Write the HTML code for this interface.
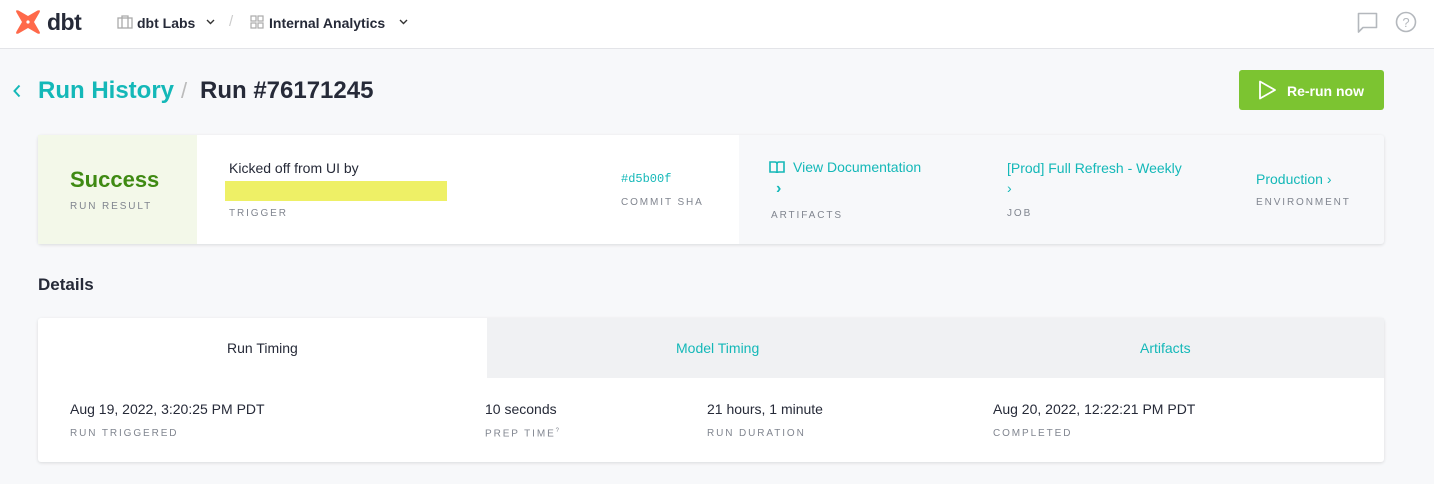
<!DOCTYPE html>
<html><head><style>
*{margin:0;padding:0;box-sizing:border-box}
body{width:1434px;height:484px;background:#f7f8fa;font-family:"Liberation Sans",sans-serif;position:relative;overflow:hidden;color:#262a38}
.a{position:absolute;white-space:nowrap}
.lbl{font-size:10px;letter-spacing:1.9px;color:#80858f}
.teal{color:#14b8b8}
</style></head><body>
<div class="a" style="left:0;top:0;width:1434px;height:49px;background:#fff;border-bottom:1px solid #e3e4e8"></div>
<svg class="a" style="left:14px;top:9px" width="28" height="26" viewBox="0 0 28 26"><path d="M2.5 3.5 Q1 0.5 4.5 1.5 L14 7 L23.5 1.5 Q27 0.5 25.5 3.5 L20 13 L25.5 22.5 Q27 25.5 23.5 24.5 L14 19 L4.5 24.5 Q1 25.5 2.5 22.5 L8 13 Z" fill="#ff694a"/><circle cx="14" cy="13" r="1.6" fill="#fff"/></svg>
<div class="a" style="left:47px;top:9px;font-size:23px;font-weight:bold;color:#262a38;letter-spacing:-0.5px">dbt</div>
<svg class="a" style="left:117px;top:15px" width="16" height="14"><rect x="1" y="3" width="14" height="10" fill="none" stroke="#aaa" stroke-width="1.3"/><path d="M5 3V1h6v2M5 3v10M11 3v10" stroke="#aaa" fill="none" stroke-width="1.3"/></svg>
<div class="a" style="left:137px;top:15px;font-size:14px;font-weight:bold">dbt Labs</div>
<svg class="a" style="left:206px;top:19px" width="9" height="6"><path d="M1 1l3.5 3.5L8 1" fill="none" stroke="#333" stroke-width="1.4"/></svg>
<div class="a" style="left:229px;top:13px;font-size:15px;color:#ccc">/</div>
<svg class="a" style="left:250px;top:15px" width="14" height="14"><g fill="none" stroke="#aaa" stroke-width="1.2"><rect x="1" y="1" width="5" height="5"/><rect x="8" y="1" width="5" height="5"/><rect x="1" y="8" width="5" height="5"/><rect x="8" y="8" width="5" height="5"/></g></svg>
<div class="a" style="left:269px;top:15px;font-size:14px;font-weight:bold">Internal Analytics</div>
<svg class="a" style="left:399px;top:19px" width="9" height="6"><path d="M1 1l3.5 3.5L8 1" fill="none" stroke="#333" stroke-width="1.4"/></svg>
<svg class="a" style="left:1357px;top:12px" width="22" height="22"><path d="M1.5 1.5h18v14H6l-4.5 4.5z" fill="none" stroke="#b4b8bd" stroke-width="1.6" stroke-linejoin="round"/></svg>
<svg class="a" style="left:1395px;top:11px" width="22" height="22"><circle cx="11" cy="11" r="9.5" fill="none" stroke="#b4b8bd" stroke-width="1.6"/><text x="11" y="16" text-anchor="middle" font-size="13" fill="#b4b8bd" font-family="Liberation Sans">?</text></svg>

<svg class="a" style="left:12px;top:84px" width="10" height="14"><path d="M7.5 1.5L2.5 7l5 5.5" fill="none" stroke="#14b8b8" stroke-width="2"/></svg>
<div class="a teal" style="left:38px;top:77px;font-size:24px;font-weight:bold">Run History</div>
<div class="a" style="left:181px;top:78px;font-size:22px;color:#bbb">/</div>
<div class="a" style="left:200px;top:77px;font-size:24px;font-weight:bold;color:#262a38">Run #76171245</div>
<div class="a" style="left:1239px;top:70px;width:145px;height:40px;background:#7cc431;border-radius:3px"></div>
<svg class="a" style="left:1258px;top:80px" width="20" height="20"><path d="M2 1.5L17 10 2 18.5z" fill="none" stroke="#fff" stroke-width="1.8" stroke-linejoin="round"/></svg>
<div class="a" style="left:1287px;top:83px;font-size:14px;font-weight:bold;color:#fff">Re-run now</div>

<div class="a" style="left:38px;top:135px;width:1346px;height:109px;background:#f7f8fa;border-radius:3px;box-shadow:0 1px 3px rgba(0,0,0,.12)"></div>
<div class="a" style="left:38px;top:135px;width:159px;height:109px;background:#f3f8e9"></div>
<div class="a" style="left:197px;top:135px;width:542px;height:109px;background:#fff"></div>
<div class="a" style="left:70px;top:167px;font-size:22px;font-weight:bold;color:#3f8a13">Success</div>
<div class="a lbl" style="left:70px;top:201px">RUN RESULT</div>
<div class="a" style="left:229px;top:160px;font-size:14px">Kicked off from UI by</div>
<div class="a" style="left:225px;top:181px;width:222px;height:20px;background:#eef066"></div>
<div class="a lbl" style="left:229px;top:208px">TRIGGER</div>
<div class="a teal" style="left:621px;top:172px;font-size:12px;font-family:'Liberation Mono',monospace">#d5b00f</div>
<div class="a lbl" style="left:621px;top:197px">COMMIT SHA</div>
<svg class="a" style="left:769px;top:160px" width="16" height="14"><path d="M1 2h5q2 0 2 2v9q0-1-2-1H1zM15 2h-5q-2 0-2 2v9q0-1 2-1h5z" fill="none" stroke="#14b8b8" stroke-width="1.6"/></svg>
<div class="a teal" style="left:793px;top:159px;font-size:14px">View Documentation</div>
<div class="a teal" style="left:776px;top:180px;font-size:16px;font-weight:bold">&#8250;</div>
<div class="a lbl" style="left:771px;top:210px">ARTIFACTS</div>
<div class="a teal" style="left:1007px;top:160px;font-size:14px">[Prod] Full Refresh - Weekly</div>
<div class="a teal" style="left:1007px;top:180px;font-size:14px">&#8250;</div>
<div class="a lbl" style="left:1007px;top:208px">JOB</div>
<div class="a teal" style="left:1256px;top:171px;font-size:14px">Production &#8250;</div>
<div class="a lbl" style="left:1256px;top:197px">ENVIRONMENT</div>

<div class="a" style="left:38px;top:275px;font-size:17px;font-weight:bold">Details</div>
<div class="a" style="left:38px;top:318px;width:1346px;height:144px;background:#fff;border-radius:3px;box-shadow:0 1px 3px rgba(0,0,0,.12)"></div>
<div class="a" style="left:487px;top:318px;width:897px;height:60px;background:#f0f1f3"></div>
<div class="a" style="left:227px;top:340px;font-size:14px">Run Timing</div>
<div class="a teal" style="left:676px;top:340px;font-size:14px">Model Timing</div>
<div class="a teal" style="left:1140px;top:340px;font-size:14px">Artifacts</div>
<div class="a" style="left:70px;top:401px;font-size:14px">Aug 19, 2022, 3:20:25 PM PDT</div>
<div class="a lbl" style="left:70px;top:428px">RUN TRIGGERED</div>
<div class="a" style="left:485px;top:401px;font-size:14px">10 seconds</div>
<div class="a lbl" style="left:485px;top:428px">PREP TIME<sup style="font-size:6px">?</sup></div>
<div class="a" style="left:707px;top:401px;font-size:14px">21 hours, 1 minute</div>
<div class="a lbl" style="left:707px;top:428px">RUN DURATION</div>
<div class="a" style="left:993px;top:401px;font-size:14px">Aug 20, 2022, 12:22:21 PM PDT</div>
<div class="a lbl" style="left:993px;top:428px">COMPLETED</div>
</body></html>
